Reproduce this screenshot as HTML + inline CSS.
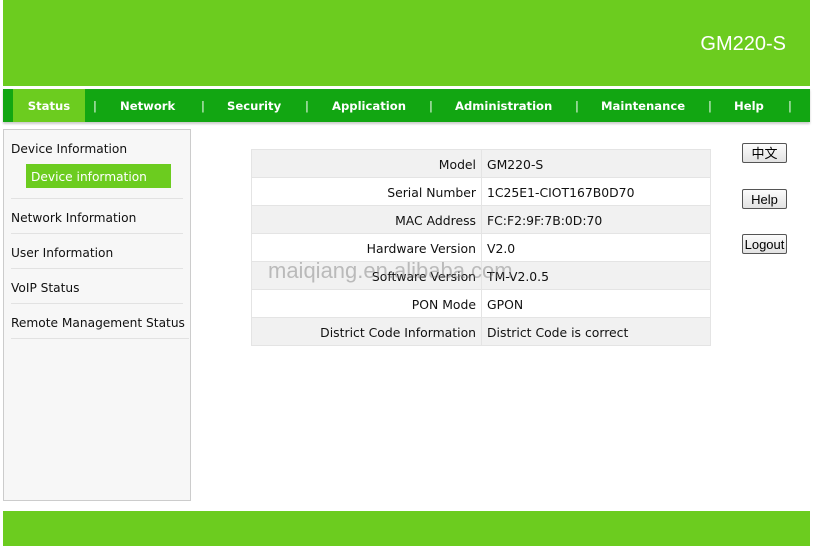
<!DOCTYPE html>
<html><head><meta charset="utf-8"><style>
body{margin:0;width:813px;height:546px;background:#fff;position:relative;overflow:hidden;font-family:"DejaVu Sans","Liberation Sans",sans-serif;}
.top{position:absolute;left:3px;top:0;width:807px;height:86px;background:#6ccc1f;}
.top span{position:absolute;right:24px;top:33px;color:#fff;font:20px "Liberation Sans",sans-serif;}
.nav{position:absolute;left:3px;top:88px;width:807px;height:33px;background:#12a612;border-top:1px solid #fff;box-shadow:0 2px 2px #ccc;}
.nav div{position:absolute;top:1px;height:33px;line-height:33px;color:#fff;font-weight:bold;font-size:11.6px;white-space:nowrap;}
.sep{color:#cfe;font-weight:normal!important}
.side{position:absolute;left:3px;top:129px;width:186px;height:370px;border:1px solid #ccc;background:#f7f7f7;font-size:12.2px;color:#111;}
.side .it{position:absolute;left:7px;width:172px;border-bottom:1px solid #e2e2e2;height:34px;line-height:38px;white-space:nowrap;}
.sel{position:absolute;left:22px;top:34px;width:145px;height:24px;line-height:26px;background:#6ccc1f;color:#fff;padding-left:5px;box-sizing:border-box;font-size:12.2px;}
table{position:absolute;left:251px;top:149px;border-collapse:collapse;font-size:12.4px;color:#111;}
td{height:28px;border:1px solid #e4e4e4;padding:2px 5px 0;box-sizing:border-box;white-space:nowrap;}
td.l{width:230px;text-align:right;}
td.v{width:229px;}
tr:nth-child(odd){background:#f1f1f1}
.btn{position:absolute;left:742px;width:45px;height:20px;border:1px solid #555;border-radius:2px;background:linear-gradient(#fcfcfc,#e2e2e2);font:13px "Liberation Sans","Noto Sans CJK SC",sans-serif;text-align:center;line-height:19px;color:#000;box-sizing:border-box;}
.bot{position:absolute;left:3px;top:511px;width:807px;height:35px;background:#6ccc1f;}
.wm{position:absolute;left:268px;top:258px;font:22px "Liberation Sans",sans-serif;color:rgba(120,120,120,.45);}
</style></head><body>
<div class="top"><span>GM220-S</span></div>
<div class="nav">
<div style="left:10px;width:72px;top:0;background:#6ccc1f;text-align:center;line-height:35px">Status</div>
<div class="sep" style="left:90px">|</div>
<div style="left:117px">Network</div>
<div class="sep" style="left:198px">|</div>
<div style="left:224px">Security</div>
<div class="sep" style="left:302px">|</div>
<div style="left:329px">Application</div>
<div class="sep" style="left:426px">|</div>
<div style="left:452px">Administration</div>
<div class="sep" style="left:572px">|</div>
<div style="left:598px">Maintenance</div>
<div class="sep" style="left:705px">|</div>
<div style="left:731px">Help</div>
<div class="sep" style="left:785px">|</div>
</div>
<div class="side">
<div class="it" style="top:0;height:68px;">Device Information</div>
<div class="sel">Device information</div>
<div class="it" style="top:69px">Network Information</div>
<div class="it" style="top:104px">User Information</div>
<div class="it" style="top:139px">VoIP Status</div>
<div class="it" style="top:174px;width:178px">Remote Management Status</div>
</div>
<table>
<tr><td class="l">Model</td><td class="v">GM220-S</td></tr>
<tr><td class="l">Serial Number</td><td class="v">1C25E1-CIOT167B0D70</td></tr>
<tr><td class="l">MAC Address</td><td class="v">FC:F2:9F:7B:0D:70</td></tr>
<tr><td class="l">Hardware Version</td><td class="v">V2.0</td></tr>
<tr><td class="l">Software Version</td><td class="v">TM-V2.0.5</td></tr>
<tr><td class="l">PON Mode</td><td class="v">GPON</td></tr>
<tr><td class="l">District Code Information</td><td class="v">District Code is correct</td></tr>
</table>
<div class="wm">maiqiang.en.alibaba.com</div>
<div class="btn" style="top:143px">中文</div>
<div class="btn" style="top:189px">Help</div>
<div class="btn" style="top:234px">Logout</div>
<div class="bot"></div>
</body></html>
